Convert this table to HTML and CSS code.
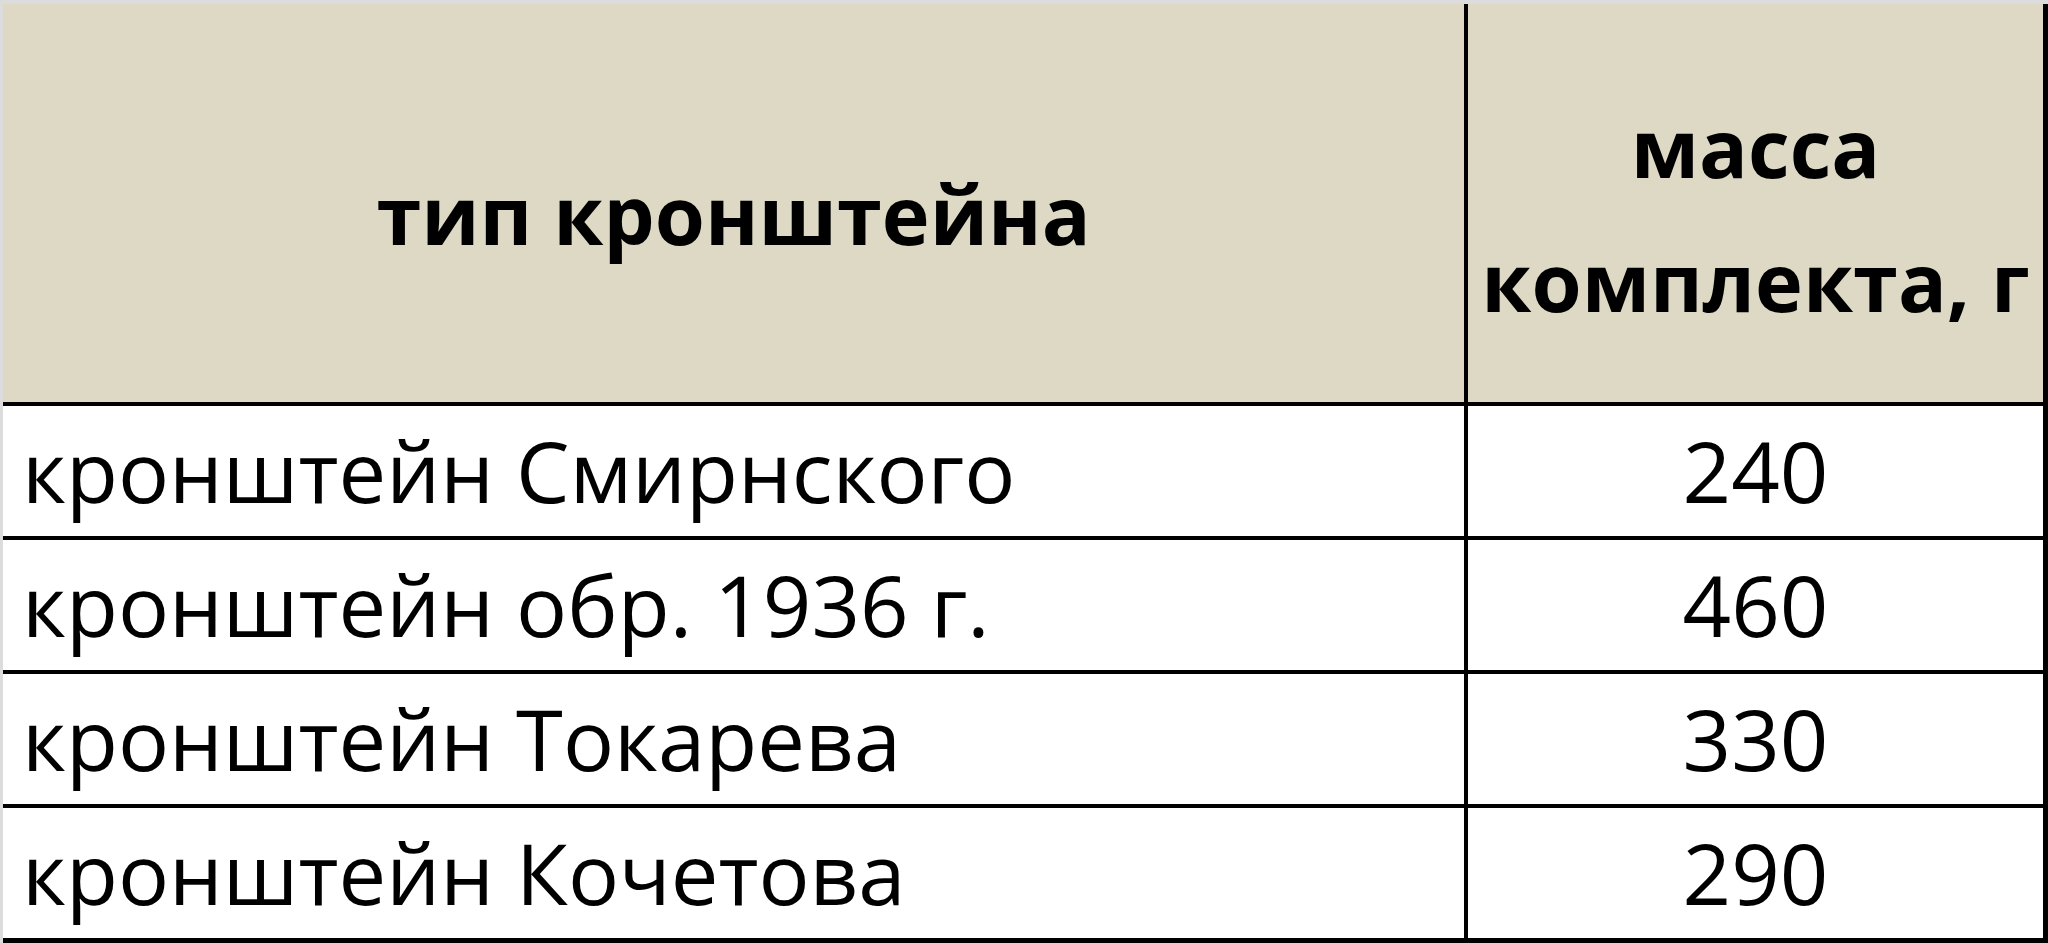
FILE: index.html
```html
<!DOCTYPE html>
<html lang="ru">
<head>
<meta charset="utf-8">
<title>Масса кронштейнов</title>
<link rel="stylesheet" href="styles.css">
</head>
<body>
<div class="sheet">
  <div class="cell head">тип кронштейна</div>
  <div class="cell head">масса<br>комплекта, г</div>
  <div class="cell name">кронштейн Смирнского</div>
  <div class="cell num">240</div>
  <div class="cell name">кронштейн обр. 1936 г.</div>
  <div class="cell num">460</div>
  <div class="cell name">кронштейн Токарева</div>
  <div class="cell num">330</div>
  <div class="cell name">кронштейн Кочетова</div>
  <div class="cell num">290</div>
</div>
</body>
</html>
```
FILE: styles.css
```css
html, body {
  margin: 0;
  padding: 0;
}
body {
  background: #dcdcdc;
  width: 2048px;
  height: 943px;
  overflow: hidden;
  font-family: "Open Sans", "Noto Sans", sans-serif;
  color: #000;
}
.sheet {
  margin: 4px 0 0 3px;
  display: grid;
  grid-template-columns: 1461px 575px;
  grid-template-rows: 398px repeat(4, 130px);
  gap: 4px;
  padding: 0 5px 5px 0;
  background: #000;
  width: 2040px;
}
.cell {
  display: flex;
  align-items: center;
  background: #fff;
  font-size: 85px;
  line-height: 1.5;
  white-space: nowrap;
}
.head {
  background: #ddd9c4;
  font-size: 81px;
  font-weight: 700;
  line-height: 1.65;
  padding-top: 22px;
  justify-content: center;
  text-align: center;
}
.name {
  padding-left: 19px;
}
.num {
  justify-content: center;
}
```
